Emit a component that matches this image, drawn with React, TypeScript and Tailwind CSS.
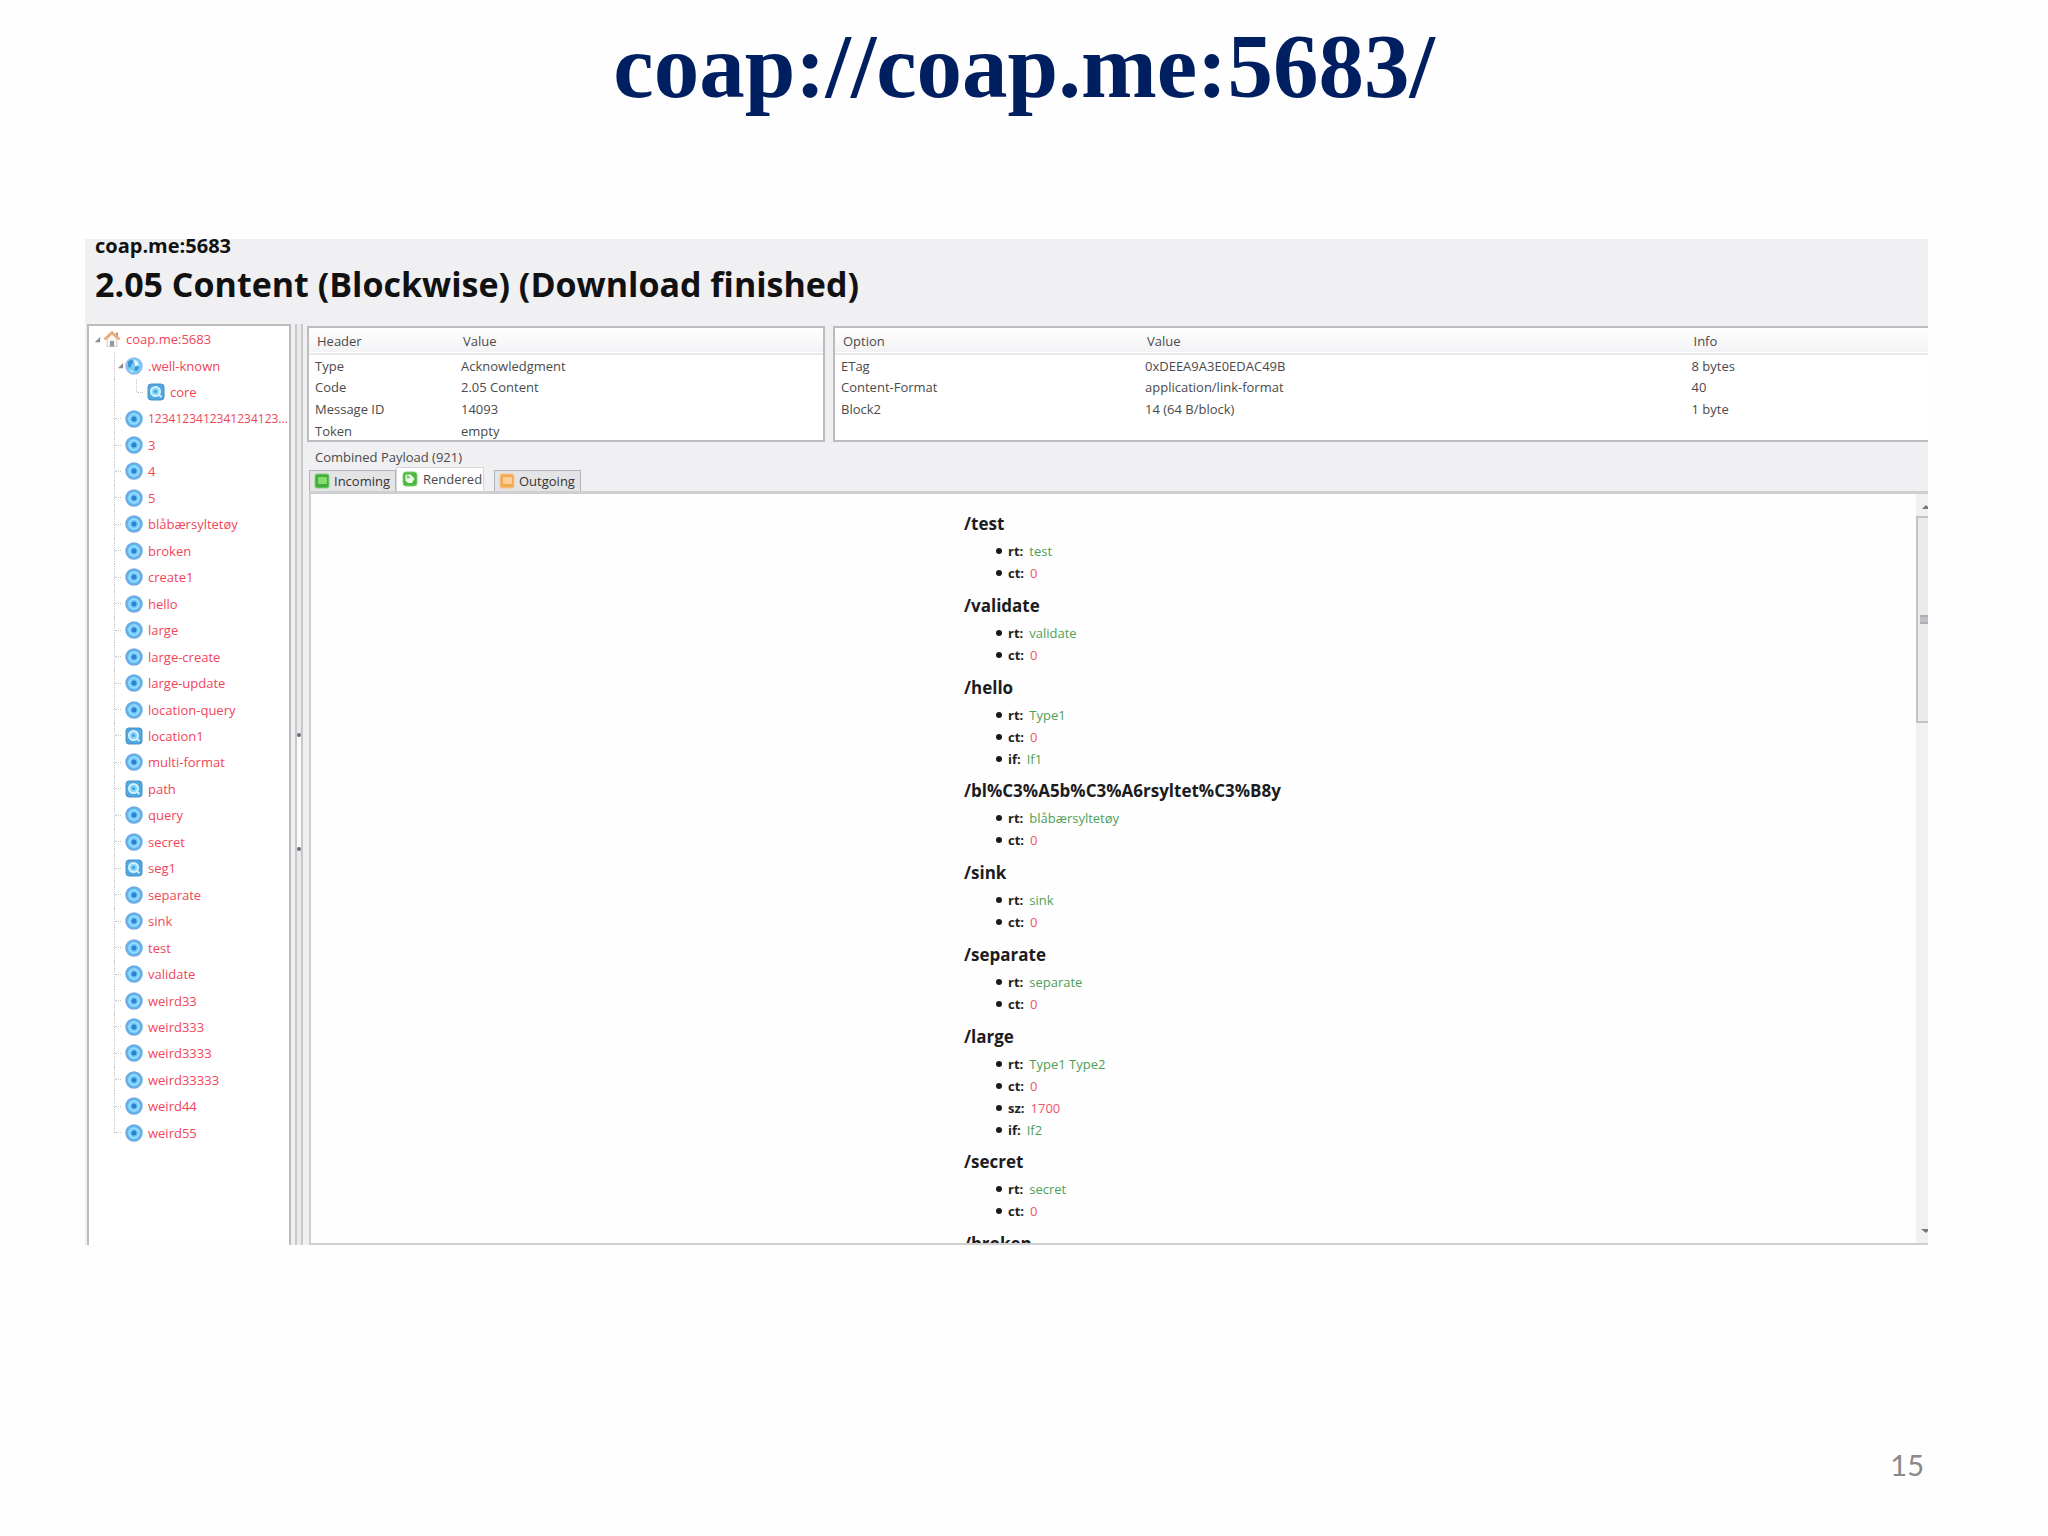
import { useState } from 'react';

type Kind = 'home' | 'globe' | 'resource' | 'search';

const tree: { name: string; kind: Kind; depth: number }[] = [
    { name: 'coap.me:5683', kind: 'home', depth: 0 },
    { name: '.well-known', kind: 'globe', depth: 1 },
    { name: 'core', kind: 'search', depth: 2 },
    { name: '1234123412341234123...', kind: 'resource', depth: 1 },
    { name: '3', kind: 'resource', depth: 1 },
    { name: '4', kind: 'resource', depth: 1 },
    { name: '5', kind: 'resource', depth: 1 },
    { name: 'blåbærsyltetøy', kind: 'resource', depth: 1 },
    { name: 'broken', kind: 'resource', depth: 1 },
    { name: 'create1', kind: 'resource', depth: 1 },
    { name: 'hello', kind: 'resource', depth: 1 },
    { name: 'large', kind: 'resource', depth: 1 },
    { name: 'large-create', kind: 'resource', depth: 1 },
    { name: 'large-update', kind: 'resource', depth: 1 },
    { name: 'location-query', kind: 'resource', depth: 1 },
    { name: 'location1', kind: 'search', depth: 1 },
    { name: 'multi-format', kind: 'resource', depth: 1 },
    { name: 'path', kind: 'search', depth: 1 },
    { name: 'query', kind: 'resource', depth: 1 },
    { name: 'secret', kind: 'resource', depth: 1 },
    { name: 'seg1', kind: 'search', depth: 1 },
    { name: 'separate', kind: 'resource', depth: 1 },
    { name: 'sink', kind: 'resource', depth: 1 },
    { name: 'test', kind: 'resource', depth: 1 },
    { name: 'validate', kind: 'resource', depth: 1 },
    { name: 'weird33', kind: 'resource', depth: 1 },
    { name: 'weird333', kind: 'resource', depth: 1 },
    { name: 'weird3333', kind: 'resource', depth: 1 },
    { name: 'weird33333', kind: 'resource', depth: 1 },
    { name: 'weird44', kind: 'resource', depth: 1 },
    { name: 'weird55', kind: 'resource', depth: 1 },
];

const headers = [
    ['Type', 'Acknowledgment'],
    ['Code', '2.05 Content'],
    ['Message ID', '14093'],
    ['Token', 'empty'],
];

const options = [
    ['ETag', '0xDEEA9A3E0EDAC49B', '8 bytes'],
    ['Content-Format', 'application/link-format', '40'],
    ['Block2', '14 (64 B/block)', '1 byte'],
];

const links: { path: string; attrs: [string, string][] }[] = [
    { path: '/test', attrs: [['rt', 'test'], ['ct', '0']] },
    { path: '/validate', attrs: [['rt', 'validate'], ['ct', '0']] },
    { path: '/hello', attrs: [['rt', 'Type1'], ['ct', '0'], ['if', 'If1']] },
    { path: '/bl%C3%A5b%C3%A6rsyltet%C3%B8y', attrs: [['rt', 'blåbærsyltetøy'], ['ct', '0']] },
    { path: '/sink', attrs: [['rt', 'sink'], ['ct', '0']] },
    { path: '/separate', attrs: [['rt', 'separate'], ['ct', '0']] },
    { path: '/large', attrs: [['rt', 'Type1 Type2'], ['ct', '0'], ['sz', '1700'], ['if', 'If2']] },
    { path: '/secret', attrs: [['rt', 'secret'], ['ct', '0']] },
    { path: '/broken', attrs: [] },
];

const TreeIcon = ({ kind }: { kind: Kind }) => {
    if (kind === 'home') {
        return (
            <svg viewBox="0 0 18 18" className="size-[18px] shrink-0">
                <path d="M4 9v7.5h10V9L9 4z" fill="#f7f3ee" stroke="#d8cfc6" />
                <path d="M1.5 9.5 9 2.5l7.5 7" fill="none" stroke="#e8ab7c" strokeWidth="2.6" />
                <path d="M13 2.5h2v4l-2-2z" fill="#c98f6b" />
                <rect x="7" y="11" width="4" height="5.5" fill="#8f9aa3" />
            </svg>
        );
    }
    if (kind === 'globe') {
        return (
            <svg viewBox="0 0 18 18" className="size-[18px] shrink-0">
                <circle cx="9" cy="9" r="8" fill="#74cdf6" stroke="#94b8ea" strokeWidth="1.5" />
                <path d="M3 5c3-3 5-2 5 0s-2 2-2 4-2 2-3 0zM10 10c2-1 3-1 4 0-1 3-2 4-3 4s-2-2-1-4z" fill="#3a93d2" />
                <path d="M9 3c2 0 4 1 5 5l-4 1z" fill="#dff5ff" />
                <path d="M4 12c1 1 3 2 5 3H6z" fill="#dff5ff" />
            </svg>
        );
    }
    if (kind === 'search') {
        return (
            <svg viewBox="0 0 18 18" className="size-[18px] shrink-0">
                <rect x="1" y="1" width="16" height="16" rx="3" fill="#4ea9e2" stroke="#4a8fc4" />
                <circle cx="8.5" cy="8.5" r="4.5" fill="#7fd4fb" stroke="#d4f1ff" strokeWidth="2" />
                <path d="m11.5 11.5 3 2.5" stroke="#d4f1ff" strokeWidth="2" />
                <circle cx="8.5" cy="8.5" r="1.5" fill="#3f9fdc" />
            </svg>
        );
    }
    return (
        <svg viewBox="0 0 18 18" className="size-[18px] shrink-0">
            <circle cx="9" cy="9" r="8" fill="#5cb8f2" stroke="#6fa9e0" strokeWidth="1.5" />
            <circle cx="9" cy="9" r="5" fill="#6cc9fa" stroke="#a6deff" strokeWidth="1.5" />
            <circle cx="9" cy="9" r="2.5" fill="#2a83cc" />
        </svg>
    );
};

const TreeRow = ({ name, kind, depth, last }: { name: string; kind: Kind; depth: number; last: boolean }) => {
    const expandable = kind === 'home' || kind === 'globe';
    const elbow = last || depth === 2;
    return (
        <li className={depth === 0 ? 'flex' : 'flex pl-[22px]'}>
            {depth === 2 && <span className="ml-[3px] w-[19px] border-l border-dotted border-[#c4c4c4]" />}
            <span className="flex w-[14px] shrink-0 pl-[3px]">
                {depth > 0 && (
                    <span className={elbow ? 'h-1/2 border-l border-dotted border-[#c4c4c4]' : 'border-l border-dotted border-[#c4c4c4]'} />
                )}
                {expandable ? (
                    <svg viewBox="0 0 8 8" className="ml-[2px] size-[7px] self-center">
                        <path d="M7 1v6H1z" fill="#8a8a8a" />
                    </svg>
                ) : (
                    <span className="mr-1 flex-1 self-center border-t border-dotted border-[#c4c4c4]" />
                )}
            </span>
            <button className="flex items-center gap-[5px] whitespace-nowrap text-[#f2455a]">
                <TreeIcon kind={kind} />
                {/* long names only fit the column one size down */}
                <span className={name.length > 20 ? 'text-xs' : ''}>{name}</span>
            </button>
        </li>
    );
};

const DataTable = ({ columns, rows, widths }: { columns: string[]; rows: string[][]; widths: string[] }) => (
    <table className="w-full table-fixed text-left">
        <thead>
            <tr className="h-[26px] border-b-2 border-[#e9e8ea] bg-linear-to-b from-white to-[#f3f2f4]">
                {columns.map((c, i) => (
                    <th key={c} className={widths[i] + ' pl-2 font-normal'}>{c}</th>
                ))}
            </tr>
        </thead>
        <tbody>
            {rows.map((row) => (
                <tr key={row[0]} className="h-[22px]">
                    {row.map((cell) => (
                        <td key={cell} className="pl-[6px]">{cell}</td>
                    ))}
                </tr>
            ))}
        </tbody>
    </table>
);

const TabIcon = ({ id }: { id: string }) => {
    if (id === 'Rendered') {
        return (
            <svg viewBox="0 0 16 16" className="size-4">
                <rect x="1" y="1" width="14" height="14" rx="3" fill="#4fb843" stroke="#7fcf72" />
                <path d="M3.5 3.5h5l4 4-2.5 4.5H6L3.5 9.5z" fill="#e9fbe4" />
                <path d="m5 3.5 3.5 3L5 8z" fill="#7fd070" />
            </svg>
        );
    }
    const outgoing = id === 'Outgoing';
    return (
        <svg viewBox="0 0 16 16" className="size-4">
            <rect x="1" y="1" width="14" height="14" rx="2" fill={outgoing ? '#f3a952' : '#3fae3a'} stroke={outgoing ? '#f6c791' : '#86cf7c'} />
            <rect x="4" y="4" width="9" height="7" rx="1" fill={outgoing ? '#fbcf97' : '#86dc72'} />
        </svg>
    );
};

const App = () => {
    const [tab, setTab] = useState('Rendered');

    return (
        <div className="flex h-screen flex-col bg-[#fefefe] font-['Open_Sans','Noto_Sans',sans-serif]">
            <header className="h-[239px] shrink-0 pt-[15px] text-center">
                <h1 className="font-['Liberation_Serif',serif] text-[91px] leading-[104px] font-bold text-[#001f60]">coap://coap.me:5683/</h1>
            </header>

            <main className="mr-[120px] ml-[85px] flex min-h-0 flex-1 flex-col overflow-hidden bg-[#f0eff1] text-[13px] leading-[20px] text-[#4a4a4c]">
                <div className="h-[85px] shrink-0 pl-[10px] text-[#111]">
                    <p className="text-[20px] leading-[14px] font-bold">coap.me:5683</p>
                    <h2 className="pt-[9px] text-[34px] leading-[44px] font-bold">2.05 Content (Blockwise) (Download finished)</h2>
                </div>

                <div className="flex min-h-0 flex-1 pl-[2px]">
                    <nav className="w-[204px] shrink-0 overflow-hidden border-x-2 border-t-2 border-[#bcbbbe] bg-white">
                        <ul className="grid h-[820px] auto-rows-fr">
                            {tree.map((node, i) => (
                                <TreeRow key={node.name} {...node} last={i === tree.length - 1} />
                            ))}
                        </ul>
                    </nav>

                    {/* sash between the tree and the response */}
                    <div className="flex w-4 shrink-0 justify-center">
                        <div className="flex w-2 flex-col items-center justify-center border-x-2 border-[#c9c8cb] bg-[#eaeaec] pt-[14px]">
                            <span className="size-1 rounded-full bg-[#707074]" />
                            <span className="h-[110px] w-1 bg-[#fafafa]" />
                            <span className="size-1 rounded-full bg-[#707074]" />
                        </div>
                    </div>

                    <div className="flex min-w-0 flex-1 flex-col">
                        <div className="flex h-[118px] shrink-0 gap-2 pt-[2px]">
                            <section className="w-[518px] shrink-0 border-2 border-[#bcbbbe] bg-white">
                                <DataTable columns={['Header', 'Value']} rows={headers} widths={['w-[146px]', '']} />
                            </section>
                            <section className="min-w-0 flex-1 border-y-2 border-l-2 border-[#bcbbbe] bg-white">
                                <DataTable columns={['Option', 'Value', 'Info']} rows={options} widths={['w-[304px]', 'w-[50%]', '']} />
                            </section>
                        </div>

                        <p className="h-[25px] shrink-0 pt-[5px] pl-2">Combined Payload (921)</p>

                        <div role="tablist" className="flex h-6 shrink-0 items-end pl-[2px]">
                            {['Incoming', 'Rendered', 'Outgoing'].map((t) => (
                                <button
                                    key={t}
                                    role="tab"
                                    aria-selected={tab === t}
                                    onClick={() => setTab(t)}
                                    className={
                                        tab === t
                                            ? 'mr-[10px] flex h-6 w-[88px] items-center gap-[5px] border-x border-t border-[#d6d5d8] bg-white pb-[2px] pl-[5px]'
                                            : 'flex h-[21px] w-[87px] items-center gap-1 border-x border-t border-[#b5b4b8] bg-[#e4e3e6] pl-1 text-[#333]'
                                    }
                                >
                                    <TabIcon id={t} />
                                    {t}
                                </button>
                            ))}
                        </div>

                        <div className="ml-[2px] flex min-h-0 flex-1 border-t-[3px] border-b-2 border-l-2 border-[#cfced1] bg-[#fefefe]">
                            <div className="min-w-0 flex-1 overflow-hidden pt-4 pl-[653px]">
                                <div className="flex h-[750px] flex-col justify-between">
                                    {links.map((link) => (
                                        <section key={link.path}>
                                            <h3 className="mb-[2px] text-[17px] leading-[28px] font-bold text-[#1c1c1e]">{link.path}</h3>
                                            <ul className="pl-8 leading-[22px]">
                                                {link.attrs.map(([key, value]) => (
                                                    <li key={key} className="flex items-center before:mr-[6px] before:size-[6px] before:rounded-full before:bg-[#1a1a1c]">
                                                        <b className="mr-[6px] text-[#222]">{key}:</b>
                                                        <span className={/^\d+$/.test(value) ? 'text-[#ee5468]' : 'text-[#4f9f58]'}>{value}</span>
                                                    </li>
                                                ))}
                                            </ul>
                                        </section>
                                    ))}
                                </div>
                            </div>

                            <div className="flex w-3 shrink-0 flex-col items-center bg-[#f1f0f2] pb-2">
                                <svg viewBox="0 0 12 22" className="h-[22px] w-3">
                                    <path d="m6 15 4-4 2 2v2z" fill="#77777b" />
                                </svg>
                                <div className="flex h-[207px] w-3 items-center justify-end border-y-2 border-l-2 border-[#c4c3c7] bg-[#ebeaec]">
                                    <span className="h-[9px] w-2 border-y-2 border-[#aeadb1] bg-[#c2c1c5]" />
                                </div>
                                <svg viewBox="0 0 12 8" className="mt-auto h-2 w-3">
                                    <path d="M5 2h7v2l-2 2z" fill="#77777b" />
                                </svg>
                            </div>
                        </div>
                    </div>
                </div>
            </main>

            <footer className="h-[291px] shrink-0 pt-[200px] pr-[124px] text-right font-['Lato',sans-serif] text-[29px] leading-[40px] text-[#898989]">15</footer>
        </div>
    );
};

export default App;
